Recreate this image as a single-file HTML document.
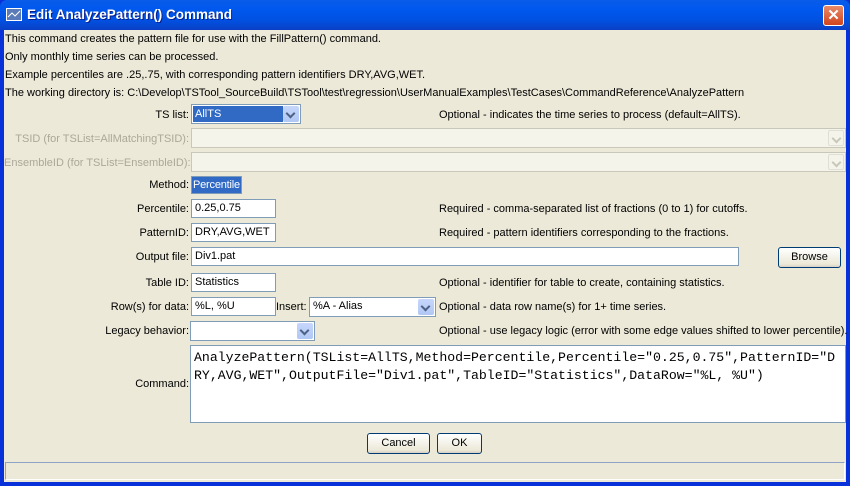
<!DOCTYPE html>
<html><head><style>
*{box-sizing:border-box;margin:0;padding:0}
body{width:850px;height:486px;overflow:hidden;font-family:"Liberation Sans",sans-serif;font-size:11px;color:#000;background:#0831d9;position:relative}
.title{position:absolute;left:0;top:0;width:850px;height:30px;background:linear-gradient(#0a5ce8,#0058ee 30%,#0150e0 70%,#0a3fc4);border-radius:7px 7px 0 0}
.title span{position:absolute;left:27px;top:7px;color:#fff;font-weight:bold;font-size:13.5px;text-shadow:1px 1px #0a1e8a}
.body{position:absolute;left:4px;top:30px;width:842px;height:452px;background:#ece9d8}
.a{position:absolute;white-space:nowrap}
.l{position:absolute;text-align:right;width:185px;left:0;white-space:nowrap}
.g{color:#aca899}
.tf{position:absolute;background:#fff;border:1px solid #7f9db9;padding:2px 3px;white-space:nowrap;overflow:hidden}
.dis{background:#f5f4ea;border-color:#c9c7ba}
.arr{position:absolute;right:1px;top:1px;bottom:1px;width:16px;background:linear-gradient(#c6d6fb,#b0c8f5);border-radius:2px}
.arr:after{content:"";position:absolute;left:4px;top:4px;width:5px;height:5px;border-right:2px solid #4d6185;border-bottom:2px solid #4d6185;transform:rotate(45deg)}
.dis .arr{background:#f5f4ea;border:1px solid #e0dfd5}
.dis .arr:after{border-color:#c9c7ba}
.btn{position:absolute;border:1px solid #003c74;border-radius:3px;background:linear-gradient(#fff,#ece9d8 85%,#d6d0c5);text-align:center;line-height:18px}
</style></head><body>
<div class="title"><svg style="position:absolute;left:6px;top:8px" width="16" height="14"><rect x="0" y="0" width="16" height="13" fill="#fff"/><rect x="1" y="1" width="14" height="11" fill="#5a7ab8"/><path d="M2 9 L6 5 L9 8 L14 3" stroke="#fff" fill="none"/></svg><span>Edit AnalyzePattern() Command</span>
<div style="position:absolute;left:823px;top:5px;width:21px;height:21px;border:1px solid #fff;border-radius:3px;background:linear-gradient(#e88a6a,#d1441c);color:#fff;font-weight:bold;font-size:15px;text-align:center;line-height:19px">✕</div></div>
<div class="body">
<div class="a" style="left:1px;top:3px">This command creates the pattern file for use with the FillPattern() command.</div>
<div class="a" style="left:1px;top:21px">Only monthly time series can be processed.</div>
<div class="a" style="left:1px;top:39px">Example percentiles are .25,.75, with corresponding pattern identifiers DRY,AVG,WET.</div>
<div class="a" style="left:1px;top:57px">The working directory is: C:\Develop\TSTool_SourceBuild\TSTool\test\regression\UserManualExamples\TestCases\CommandReference\AnalyzePattern</div>

<div class="l" style="top:79px">TS list:</div>
<div class="tf" style="left:187px;top:74px;width:110px;height:20px;padding:1px"><div style="background:#316ac5;color:#fff;height:16px;width:90px;padding:2px 2px;line-height:13px">AllTS</div><div class="arr"></div></div>
<div class="a" style="left:435px;top:79px">Optional - indicates the time series to process (default=AllTS).</div>

<div class="l g" style="top:103px">TSID (for TSList=AllMatchingTSID):</div>
<div class="tf dis" style="left:187px;top:98px;width:655px;height:20px"><div class="arr"></div></div>
<div class="l g" style="top:127px">EnsembleID (for TSList=EnsembleID):</div>
<div class="tf dis" style="left:187px;top:122px;width:655px;height:20px"><div class="arr"></div></div>

<div class="l" style="top:149px">Method:</div>
<div class="a" style="left:187px;top:146px;width:51px;height:18px;background:#316ac5;color:#fff;padding:2px 0 0 1px;border:1px solid #7f9db9;overflow:hidden;letter-spacing:-0.2px">Percentile</div>

<div class="l" style="top:173px">Percentile:</div>
<div class="tf" style="left:187px;top:169px;width:85px;height:19px">0.25,0.75</div>
<div class="a" style="left:435px;top:173px">Required - comma-separated list of fractions (0 to 1) for cutoffs.</div>

<div class="l" style="top:197px">PatternID:</div>
<div class="tf" style="left:187px;top:193px;width:85px;height:19px">DRY,AVG,WET</div>
<div class="a" style="left:435px;top:197px">Required - pattern identifiers corresponding to the fractions.</div>

<div class="l" style="top:221px">Output file:</div>
<div class="tf" style="left:187px;top:217px;width:548px;height:19px">Div1.pat</div>
<div class="btn" style="left:774px;top:217px;width:63px;height:21px">Browse</div>

<div class="l" style="top:247px">Table ID:</div>
<div class="tf" style="left:187px;top:243px;width:85px;height:19px">Statistics</div>
<div class="a" style="left:435px;top:247px">Optional - identifier for table to create, containing statistics.</div>

<div class="l" style="top:271px">Row(s) for data:</div>
<div class="tf" style="left:187px;top:267px;width:85px;height:19px">%L, %U</div>
<div class="a" style="left:272px;top:271px">Insert:</div>
<div class="tf" style="left:305px;top:267px;width:127px;height:20px">%A - Alias<div class="arr"></div></div>
<div class="a" style="left:435px;top:271px">Optional - data row name(s) for 1+ time series.</div>

<div class="l" style="top:295px">Legacy behavior:</div>
<div class="tf" style="left:186px;top:291px;width:125px;height:20px"><div class="arr"></div></div>
<div class="a" style="left:435px;top:295px">Optional - use legacy logic (error with some edge values shifted to lower percentile).</div>

<div class="l" style="top:348px">Command:</div>
<div class="tf" style="left:186px;top:315px;width:656px;height:78px;font-family:'Liberation Mono',monospace;font-size:13.2px;line-height:18px;padding:3px 3px;white-space:normal;word-break:break-all">AnalyzePattern(TSList=AllTS,Method=Percentile,Percentile="0.25,0.75",PatternID="DRY,AVG,WET",OutputFile="Div1.pat",TableID="Statistics",DataRow="%L, %U")</div>

<div class="btn" style="left:363px;top:403px;width:63px;height:21px">Cancel</div>
<div class="btn" style="left:433px;top:403px;width:45px;height:21px">OK</div>

<div style="position:absolute;left:1px;top:432px;width:840px;height:18px;border:1px solid #9ab0d0;border-color:#8fa3c6 #fff #fff #8fa3c6"></div>
</div>
</body></html>
